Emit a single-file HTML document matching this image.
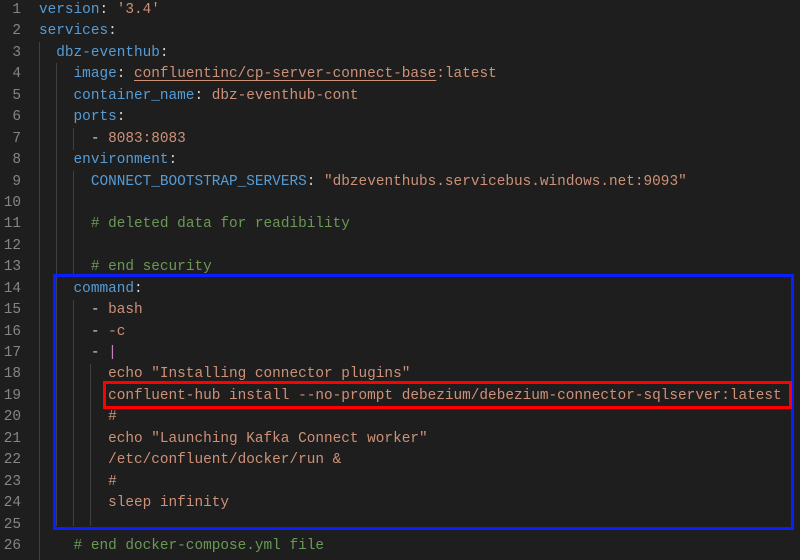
<!DOCTYPE html>
<html><head><style>
html,body{margin:0;padding:0;background:#1e1e1e;width:800px;height:560px;overflow:hidden}
.l{position:absolute;left:0;height:21.44px;line-height:21.44px;font-family:"Liberation Mono",monospace;font-size:14.4px;white-space:pre;color:#d4d4d4}
.n{position:absolute;left:0;width:21px;text-align:right;color:#858585}
.c{position:absolute;left:39px}
.k{color:#569cd6}.s{color:#ce9178}.m{color:#6a9955}.p{color:#d4d4d4}
.u{text-decoration:underline;text-decoration-color:#ce9178;text-underline-offset:3px}
.g{position:absolute;width:1px;background:#404040}
</style></head><body>
<div class="g" style="left:39px;top:42px;height:518px"></div>
<div class="g" style="left:56px;top:63px;height:463px"></div>
<div class="g" style="left:73px;top:128px;height:22px"></div>
<div class="g" style="left:73px;top:171px;height:106px"></div>
<div class="g" style="left:73px;top:300px;height:226px"></div>
<div class="g" style="left:90px;top:364px;height:162px"></div>

<div class="l" style="top:0px"><span class="n">1</span><span class="c"><span class="k">version</span>: <span class="s">'3.4'</span></span></div>
<div class="l" style="top:21.44px"><span class="n">2</span><span class="c"><span class="k">services</span>:</span></div>
<div class="l" style="top:42.88px"><span class="n">3</span><span class="c">  <span class="k">dbz-eventhub</span>:</span></div>
<div class="l" style="top:64.32px"><span class="n">4</span><span class="c">    <span class="k">image</span>: <span class="s u">confluentinc/cp-server-connect-base</span><span class="s">:latest</span></span></div>
<div class="l" style="top:85.76px"><span class="n">5</span><span class="c">    <span class="k">container_name</span>: <span class="s">dbz-eventhub-cont</span></span></div>
<div class="l" style="top:107.2px"><span class="n">6</span><span class="c">    <span class="k">ports</span>:</span></div>
<div class="l" style="top:128.64px"><span class="n">7</span><span class="c">      - <span class="s">8083:8083</span></span></div>
<div class="l" style="top:150.08px"><span class="n">8</span><span class="c">    <span class="k">environment</span>:</span></div>
<div class="l" style="top:171.52px"><span class="n">9</span><span class="c">      <span class="k">CONNECT_BOOTSTRAP_SERVERS</span>: <span class="s">"dbzeventhubs.servicebus.windows.net:9093"</span></span></div>
<div class="l" style="top:192.96px"><span class="n">10</span></div>
<div class="l" style="top:214.4px"><span class="n">11</span><span class="c">      <span class="m"># deleted data for readibility</span></span></div>
<div class="l" style="top:235.84px"><span class="n">12</span></div>
<div class="l" style="top:257.28px"><span class="n">13</span><span class="c">      <span class="m"># end security</span></span></div>
<div class="l" style="top:278.72px"><span class="n">14</span><span class="c">    <span class="k">command</span>:</span></div>
<div class="l" style="top:300.16px"><span class="n">15</span><span class="c">      - <span class="s">bash</span></span></div>
<div class="l" style="top:321.6px"><span class="n">16</span><span class="c">      - <span class="s">-c</span></span></div>
<div class="l" style="top:343.04px"><span class="n">17</span><span class="c">      - <span style="color:#c586c0">|</span></span></div>
<div class="l" style="top:364.48px"><span class="n">18</span><span class="c s">        echo "Installing connector plugins"</span></div>
<div class="l" style="top:385.92px"><span class="n">19</span><span class="c s">        confluent-hub install --no-prompt debezium/debezium-connector-sqlserver:latest</span></div>
<div class="l" style="top:407.36px"><span class="n">20</span><span class="c s">        #</span></div>
<div class="l" style="top:428.8px"><span class="n">21</span><span class="c s">        echo "Launching Kafka Connect worker"</span></div>
<div class="l" style="top:450.24px"><span class="n">22</span><span class="c s">        /etc/confluent/docker/run &amp;</span></div>
<div class="l" style="top:471.68px"><span class="n">23</span><span class="c s">        #</span></div>
<div class="l" style="top:493.12px"><span class="n">24</span><span class="c s">        sleep infinity</span></div>
<div class="l" style="top:514.56px"><span class="n">25</span></div>
<div class="l" style="top:536px"><span class="n">26</span><span class="c">    <span class="m"># end docker-compose.yml file</span></span></div>

<div style="position:absolute;left:53px;top:274px;width:735px;height:250px;border:3px solid #0a1eff"></div>
<div style="position:absolute;left:103px;top:381px;width:683px;height:22px;border:3px solid #ff0000"></div>
</body></html>
